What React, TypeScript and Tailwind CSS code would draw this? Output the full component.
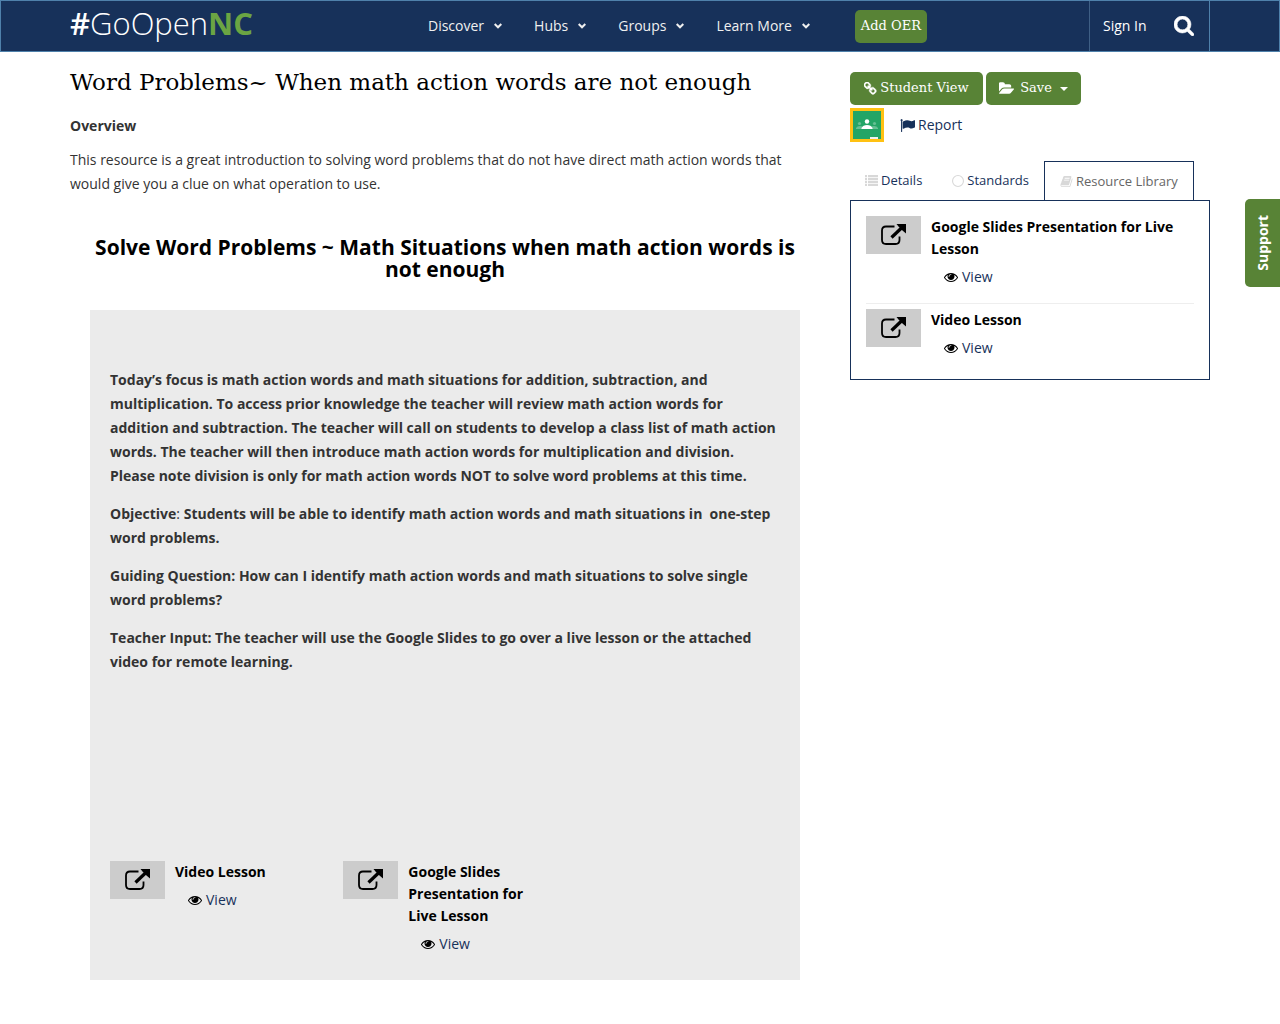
import React from 'react';

interface IconProps {
  className?: string;
}

const EyeIcon: React.FC<IconProps> = ({ className }) => (
  <svg viewBox="0 0 1792 1792" fill="currentColor" className={className} aria-hidden="true">
    <path d="M1664 960q-152-236-381-353 61 104 61 225 0 185-131.5 316.5t-316.5 131.5-316.5-131.5-131.5-316.5q0-121 61-225-229 117-381 353 133 205 333.5 326.5t434.5 121.5 434.5-121.5 333.5-326.5zm-720-384q0-20-14-34t-34-14q-125 0-214.5 89.5t-89.5 214.5q0 20 14 34t34 14 34-14 14-34q0-86 61-147t147-61q20 0 34-14t14-34zm848 384q0 34-20 69-140 230-376.5 368.5t-499.5 138.5-499.5-139-376.5-368q-20-35-20-69t20-69q140-229 376.5-368t499.5-139 499.5 139 376.5 368q20 35 20 69z" />
  </svg>
);

const SearchIcon: React.FC<IconProps> = ({ className }) => (
  <svg viewBox="64 128 1664 1664" fill="currentColor" stroke="currentColor" strokeWidth="50" className={className} aria-hidden="true">
    <path d="M1216 832q0-185-131.5-316.5t-316.5-131.5-316.5 131.5-131.5 316.5 131.5 316.5 316.5 131.5 316.5-131.5 131.5-316.5zm512 832q0 52-38 90t-90 38q-54 0-90-38l-343-342q-179 124-399 124-143 0-273.5-55.5t-225-150-150-225-55.5-273.5 55.5-273.5 150-225 225-150 273.5-55.5 273.5 55.5 225 150 150 225 55.5 273.5q0 220-124 399l343 343q37 37 37 90z" />
  </svg>
);

const FlagIcon: React.FC<IconProps> = ({ className }) => (
  <svg viewBox="0 0 1792 1792" fill="currentColor" className={className} aria-hidden="true">
    <path d="M320 256q0 72-64 110v1266q0 13-9.5 22.5t-22.5 9.5h-64q-13 0-22.5-9.5t-9.5-22.5v-1266q-64-38-64-110 0-53 37.5-90.5t90.5-37.5 90.5 37.5 37.5 90.5zm1472 64v763q0 25-12.5 38.5t-39.5 27.5q-215 116-369 116-61 0-123.5-22t-108.5-48-115.5-48-142.5-22q-192 0-464 146-17 9-33 9-26 0-45-19t-19-45v-742q0-32 31-55 21-14 79-43 236-120 421-120 107 0 200 29t219 88q38 19 88 19 54 0 117.5-21t110-47 88-47 54.5-21q26 0 45 19t19 45z" />
  </svg>
);

const FolderIcon: React.FC<IconProps> = ({ className }) => (
  <svg viewBox="0 0 1815 1792" fill="currentColor" className={className} aria-hidden="true">
    <path d="M1815 952q0 31-31 66l-336 396q-43 51-120.5 86.5t-143.5 35.5h-1088q-34 0-60.5-13t-26.5-43q0-31 31-66l336-396q43-51 120.5-86.5t143.5-35.5h1088q34 0 60.5 13t26.5 43zm-343-344v160h-832q-94 0-197 47.5t-164 119.5l-337 396-5 6q0-4-.5-12.5t-.5-12.5v-960q0-92 66-158t158-66h320q92 0 158 66t66 158v32h544q92 0 158 66t66 158z" />
  </svg>
);

const LinkIcon: React.FC<IconProps> = ({ className }) => (
  <svg viewBox="64 64 1664 1664" fill="currentColor" stroke="currentColor" strokeWidth="50" className={className} aria-hidden="true">
    <path d="M1456 1216q0-40-28-68l-208-208q-28-28-68-28-42 0-72 32 3 3 19 18.5t21.5 21.5 15 19 13 25.5 3.5 27.5q0 40-28 68t-68 28q-15 0-27.5-3.5t-25.5-13-19-15-21.5-21.5-18.5-19q-33 31-33 73 0 40 28 68l206 207q27 27 68 27 40 0 68-26l147-146q28-28 28-67zm-703-705q0-40-28-68l-206-207q-28-28-68-28-39 0-68 27l-147 146q-28 28-28 67 0 40 28 68l208 208q27 27 68 27 42 0 72-31-3-3-19-18.5t-21.5-21.5-15-19-13-25.5-3.5-27.5q0-40 28-68t68-28q15 0 27.5 3.5t25.5 13 19 15 21.5 21.5 18.5 19q33-31 33-73zm895 705q0 120-85 203l-147 146q-83 83-203 83-121 0-204-85l-206-207q-83-83-83-203 0-123 88-209l-88-88q-86 88-208 88-120 0-204-84l-208-208q-84-84-84-204t85-203l147-146q83-83 203-83 121 0 204 85l206 207q83 83 83 203 0 123-88 209l88 88q86-88 208-88 120 0 204 84l208 208q84 84 84 204z" />
  </svg>
);

const BookIcon: React.FC<IconProps> = ({ className }) => (
  <svg viewBox="0 0 1792 1792" fill="currentColor" className={className} aria-hidden="true">
    <path d="M1703 478q40 57 18 129l-275 906q-19 64-76.5 107.5t-122.5 43.5h-923q-77 0-148.5-53.5t-99.5-131.5q-24-67-2-127 0-4 3-27t4-37q1-8-3-21.5t-3-19.5q2-11 8-21t16.5-23.5 16.5-23.5q23-38 45-91.5t30-91.5q3-10 .5-30t-.5-28q3-11 17-28t17-23q21-36 42-92t25-90q1-9-2.5-32t.5-28q4-13 22-30.5t22-22.5q19-26 42.5-84.5t27.5-96.5q1-8-3-25.5t-2-26.5q2-8 9-18t18-23 17-21q8-12 16.5-30.5t15-35 16-36 19.5-32 26.5-23.5 36-11.5 47.5 5.5l-1 3q38-9 51-9h761q74 0 114 56t18 130l-274 906q-36 119-71.5 153.5t-128.5 34.5h-869q-27 0-38 15-11 16-1 43 24 70 144 70h923q29 0 56-15.5t35-41.5l300-987q7-22 5-57 38 15 59 43zm-1064 2q-4 13 2 22.5t20 9.5h608q13 0 25.5-9.5t16.5-22.5l21-64q4-13-2-22.5t-20-9.5h-608q-13 0-25.5 9.5t-16.5 22.5zm-83 256q-4 13 2 22.5t20 9.5h608q13 0 25.5-9.5t16.5-22.5l21-64q4-13-2-22.5t-20-9.5h-608q-13 0-25.5 9.5t-16.5 22.5z" />
  </svg>
);

const ListIcon: React.FC<IconProps> = ({ className }) => (
  <svg viewBox="0 0 13 11" fill="currentColor" className={className} aria-hidden="true">
    <path d="M0 0h2v2.300H0zM3 0h10v2.300H3zM0 3h2v2.300H0zM3 3h10v2.300H3zM0 6h2v2.300H0zM3 6h10v2.300H3zM0 9h2v2H0zM3 9h10v2H3z" />
  </svg>
);

const CircleIcon: React.FC<IconProps> = ({ className }) => (
  <svg viewBox="0 0 11 11" fill="none" stroke="currentColor" className={className} aria-hidden="true">
    <circle cx="5.5" cy="5.5" r="5" />
  </svg>
);

const ChevronIcon: React.FC<IconProps> = ({ className }) => (
  <svg viewBox="0 0 8 6" fill="none" stroke="currentColor" strokeWidth="2" className={className} aria-hidden="true">
    <path d="M0.7 1L4 4.3L7.3 1" />
  </svg>
);

const CaretIcon: React.FC<IconProps> = ({ className }) => (
  <svg viewBox="0 0 8 4" fill="currentColor" className={className} aria-hidden="true">
    <path d="M0 0h8L4 4z" />
  </svg>
);

const ExternalIcon: React.FC<IconProps> = ({ className }) => (
  <svg viewBox="0 0 25 22" fill="none" stroke="currentColor" className={className} aria-hidden="true">
    <path d="M13.5 2.500H5Q1 2.500 1 6.500v9.500Q1 20 5 20h9.500q4 0 4-4V12.500" strokeWidth="1.8" />
    <path d="M10.500 13.500L21 3.500" strokeWidth="3.200" />
    <path d="M15.500 0H25V9.500L21.500 6.500L17.500 2.500z" fill="currentColor" stroke="none" />
  </svg>
);

const ClassroomIcon: React.FC<IconProps> = ({ className }) => (
  <svg viewBox="0 0 34 34" className={className} aria-hidden="true">
    <path d="M0 0h34v34H0z" fill="#ffc112" />
    <path d="M3 3h28v28H3z" fill="#23a566" />
    <g fill="#66bf93">
      <circle cx="9.500" cy="15.500" r="1.600" />
      <circle cx="24.500" cy="15.500" r="1.600" />
      <path d="M6 21v-1q1-2 4-2 2 0 3 1v2zM28 21v-1q-1-2-4-2-2 0-3 1v2z" />
    </g>
    <circle cx="17" cy="13.500" r="2.200" fill="#fff" />
    <path d="M11.500 21v-1q1.500-3 5.500-3t5.500 3v1z" fill="#fff" />
    <path d="M20 29h8v2h-8z" fill="#f1f1f1" />
  </svg>
);

const MENU = ['Discover', 'Hubs', 'Groups', 'Learn More'];

const Header: React.FC = () => (
  <header className="border border-[#4f81ab] bg-[#17315a] text-white">
    <div className="max-w-[1140px] h-[50px] mx-auto flex items-center">
      <a href="#" className="w-[358px] h-full shrink-0 text-[31px] leading-[44px] font-light whitespace-nowrap">
        <span className="font-semibold">#</span>GoOpen<span className="font-bold text-[#6ba543]">NC</span>
      </a>
      <nav className="flex items-center gap-8 text-sm text-[#f0f0f0]">
        {MENU.map(item => (
          <button key={item} className="flex items-center gap-[10px] whitespace-nowrap">
            {item}
            <ChevronIcon className="w-2 h-1.5" />
          </button>
        ))}
      </nav>
      <a href="#" className="ml-[45px] h-[33px] w-[72px] flex items-center justify-center rounded-[5px] bg-[#588336] font-['DejaVu_Serif',serif] text-[13px] whitespace-nowrap">
        Add OER
      </a>
      <div className="ml-auto h-full w-[121px] flex items-center justify-between border-l border-r border-l-[#3f5f85] border-r-[#4f81ab] pl-[13px] pr-[15px] text-sm">
        <a href="#">Sign In</a>
        <button aria-label="Search">
          <SearchIcon className="size-5" />
        </button>
      </div>
    </div>
  </header>
);

const ResourceItem: React.FC<{ title: string }> = ({ title }) => (
  <div className="flex items-start gap-[10px] text-sm leading-[22px]">
    <div className="w-[55px] h-[38px] shrink-0 flex items-center justify-center bg-[#ccc] text-black">
      <ExternalIcon className="w-[25px] h-[22px]" />
    </div>
    <div>
      <div className="font-bold text-black">{title}</div>
      <a href="#" className="mt-1.5 ml-[13px] flex items-center gap-1 text-[#17315a]">
        <EyeIcon className="size-3.5 text-black" />
        View
      </a>
    </div>
  </div>
);

const Article: React.FC = () => (
  <main className="pt-[14px] leading-6 text-sm text-[#333]">
    <h1 className="font-['DejaVu_Serif',serif] text-[23px] leading-8 text-black whitespace-nowrap">
      Word Problems~ When math action words are not enough
    </h1>
    <h2 className="mt-4 font-bold">Overview</h2>
    <p className="mt-[10px]">
      This resource is a great introduction to solving word problems that do not have direct math action words that
      would give you a clue on what operation to use.
    </p>

    <div className="mx-5 mt-10">
      <h2 className="text-center text-[21px] leading-[22px] font-bold text-black">
        Solve Word Problems ~ Math Situations when math action words is not enough
      </h2>
      <section className="mt-[30px] bg-[#ebebeb] px-5 pt-[58px] pb-[25px] font-bold">
        <div className="flex flex-col gap-[14px]">
          <p>
            Today’s focus is math action words and math situations for addition, subtraction, and multiplication. To
            access prior knowledge the teacher will review math action words for addition and subtraction. The teacher
            will call on students to develop a class list of math action words. The teacher will then introduce math
            action words for multiplication and division. Please note division is only for math action words NOT to
            solve word problems at this time.
          </p>
          <p>
            Objective<span className="font-normal">:</span> Students will be able to identify math action words and math
            situations in&nbsp; one-step word problems.
          </p>
          <p>Guiding Question: How can I identify math action words and math situations to solve single word problems?</p>
          <p>
            Teacher Input: The teacher will use the Google Slides to go over a live lesson or the attached video for
            remote learning.
          </p>
        </div>
        <div className="mt-[187px] grid grid-cols-3 gap-[30px] font-normal">
          <ResourceItem title="Video Lesson" />
          <ResourceItem title="Google Slides Presentation for Live Lesson" />
        </div>
      </section>
    </div>
  </main>
);

const Sidebar: React.FC = () => (
  <aside className="pt-5 text-sm text-[#17315a]">
    <div className="flex gap-[3px] font-['DejaVu_Serif',serif] text-[13px] text-white">
      <button className="h-[33px] w-[133px] flex items-center justify-center gap-[3px] rounded-[5px] bg-[#588336] whitespace-nowrap">
        <LinkIcon className="size-[13px]" />
        Student View
      </button>
      <button className="h-[33px] w-[95px] flex items-center justify-center rounded-[5px] bg-[#588336]">
        <FolderIcon className="size-[15px]" />
        <span className="ml-1.5 mr-2">Save</span>
        <CaretIcon className="w-2 h-1" />
      </button>
    </div>
    <div className="mt-[3px] flex items-center gap-4">
      <button aria-label="Share to Google Classroom">
        <ClassroomIcon className="size-[34px]" />
      </button>
      <a href="#" className="flex items-center gap-[3px]">
        <FlagIcon className="size-[15px]" />
        Report
      </a>
    </div>

    <div role="tablist" className="mt-[19px] h-[39px] flex text-[13px] whitespace-nowrap">
      <button role="tab" aria-selected={false} className="px-[15px] flex items-center gap-[3px]">
        <ListIcon className="w-[13px] h-[11px] text-[#d8d8d8]" />
        Details
      </button>
      <button role="tab" aria-selected={false} className="px-[15px] flex items-center gap-[3px]">
        <CircleIcon className="size-[12px] text-[#d8d8d8]" />
        Standards
      </button>
      <button role="tab" aria-selected className="border border-b-0 border-[#17315a] bg-white px-[15px] flex items-center gap-[3px] text-[#666]">
        <BookIcon className="size-[13px] text-[#d8d8d8]" />
        Resource Library
      </button>
    </div>
    <div className="border border-[#17315a] px-[15px] pt-[15px] pb-5">
      <ResourceItem title="Google Slides Presentation for Live Lesson" />
      <hr className="mt-[15px] mb-[5px] border-[#eee]" />
      <ResourceItem title="Video Lesson" />
    </div>
  </aside>
);

const App: React.FC = () => {
  return (
    <div className="min-h-screen bg-white font-['Open_Sans',sans-serif]">
      <Header />
      <div className="max-w-[1140px] mx-auto grid grid-cols-[25fr_12fr] gap-[30px]">
        <Article />
        <Sidebar />
      </div>
      <button className="fixed right-0 top-[199px] w-[35px] h-[88px] flex items-center justify-center rounded-l-[5px] bg-[#588336] text-sm font-bold text-white">
        <span className="[writing-mode:vertical-rl] rotate-180">Support</span>
      </button>
    </div>
  );
};

export default App;
